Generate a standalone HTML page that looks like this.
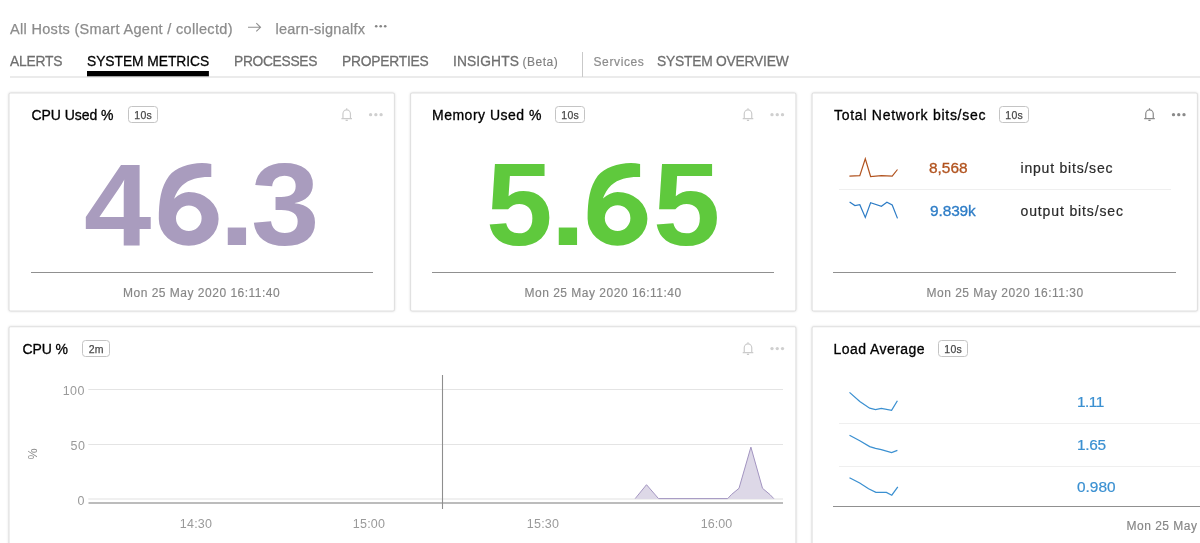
<!DOCTYPE html>
<html>
<head>
<meta charset="utf-8">
<title>learn-signalfx</title>
<style>
*{box-sizing:border-box;margin:0;padding:0}
html,body{width:1200px;height:543px;overflow:hidden;background:#fff}
body{font-family:"Liberation Sans",sans-serif;position:relative;color:#111}
.t{position:absolute;white-space:nowrap;line-height:20px}
.crumb{top:19px;font-size:14.5px;color:#8c8c8c;-webkit-text-stroke:.25px}
.tab{top:51px;-webkit-text-stroke:.3px;font-size:15px;color:#6f6f6f;transform:scaleX(.92);transform-origin:0 0}
.tab.on{color:#000}
.card{position:absolute;background:#fff;border:1px solid #dedede;box-shadow:0 1px 3px rgba(0,0,0,.13)}
.title{font-size:14px;color:#000;-webkit-text-stroke:.3px}
.badge{position:absolute;height:17px;border:1px solid #c4c4c4;border-radius:3.5px;font-size:10.5px;line-height:17px;color:#4a4a4a;text-align:center;background:#fff;letter-spacing:.3px;padding-left:.5px;-webkit-text-stroke:.25px}
.big{position:absolute;text-align:left;font-weight:bold;font-size:117px;line-height:120px;white-space:nowrap;transform-origin:0 0}
.g{position:absolute;top:0;font-weight:bold;font-size:117px;line-height:120px;transform-origin:0 0;white-space:nowrap}
.rule{position:absolute;height:1px;background:#909090}
.ts{font-size:12px;color:#868686;-webkit-text-stroke:.15px}
.val{font-size:14px;transform:scaleX(1.1);transform-origin:0 0;-webkit-text-stroke:.3px}
.lbl{font-size:14px;color:#2b2b2b;-webkit-text-stroke:.2px}
.ax{font-size:12.5px;color:#9a9a9a}
.sep{position:absolute;height:1px;background:#efefef}
svg{position:absolute;left:0;top:0;overflow:visible}
</style>
</head>
<body>
<div id="root" style="position:absolute;left:0;top:0;width:1200px;height:543px;will-change:transform">

<!-- breadcrumb -->
<div id="c1" class="t crumb" style="left:10px;letter-spacing:.32px">All Hosts (Smart Agent / collectd)</div>
<div id="c2" class="t crumb" style="left:275.5px;letter-spacing:.25px">learn-signalfx</div>

<!-- tabs -->
<div id="t1" class="t tab" style="left:10px;letter-spacing:-.2px">ALERTS</div>
<div id="t2" class="t tab on" style="left:86.5px;letter-spacing:-.04px">SYSTEM METRICS</div>
<div id="t3" class="t tab" style="left:233.5px;letter-spacing:-.34px">PROCESSES</div>
<div id="t4" class="t tab" style="left:342px;letter-spacing:-.23px">PROPERTIES</div>
<div id="t5" class="t tab" style="left:453px;letter-spacing:.12px">INSIGHTS</div>
<div id="t5b" class="t tab" style="left:522.5px;top:52px;color:#808080;-webkit-text-stroke:.15px;font-size:12px;letter-spacing:.5px;transform:none">(Beta)</div>
<div id="t6" class="t" style="left:593.5px;top:51.5px;font-size:12px;color:#8c8c8c;letter-spacing:.62px;-webkit-text-stroke:.2px">Services</div>
<div id="t7" class="t tab" style="left:657px;letter-spacing:-.23px">SYSTEM OVERVIEW</div>
<div style="position:absolute;left:10px;top:76px;width:1190px;height:2px;background:#ebebeb"></div>

<div style="position:absolute;left:582px;top:52px;width:1px;height:25px;background:#c9c9c9"></div>

<!-- cards -->
<svg width="1200" height="543" viewBox="0 0 1200 543" style="filter:drop-shadow(0 .5px 1px rgba(0,0,0,.13))">
  <g fill="#fff" stroke="#e0e0e0" stroke-width="1.1">
    <rect x="9" y="93" width="385.4" height="218" rx="1.5"/>
    <rect x="410.6" y="93" width="385.3" height="218" rx="1.5"/>
    <rect x="812.1" y="93" width="385.3" height="218" rx="1.5"/>
    <rect x="9" y="326.8" width="786.9" height="240" rx="1.5"/>
    <rect x="812.1" y="326.8" width="400" height="240" rx="1.5"/>
  </g>
</svg>

<!-- card 1 -->
<div id="h1" class="t title" style="left:31.5px;top:105px;letter-spacing:-.05px">CPU Used %</div>
<div class="badge" style="left:128px;top:106px;width:30px">10s</div>
<div id="b1" style="position:absolute;left:0;top:145px;width:400px;height:120px;color:#a99cbe">
<span class="g" style="left:83.7px;transform:scaleX(1.035)">4</span><span class="g" style="left:219.25px;transform:scaleX(1.106)">.</span><span class="g" style="left:251.45px;transform:scaleX(1.0517)">3</span></div>
<div class="rule" style="left:31px;top:272px;width:342px"></div>
<div id="s1" class="t ts" style="left:123px;top:283px;letter-spacing:.5px">Mon 25 May 2020 16:11:40</div>

<!-- card 2 -->
<div id="h2" class="t title" style="left:432px;top:105px;letter-spacing:.5px">Memory Used %</div>
<div class="badge" style="left:555px;top:106px;width:30px">10s</div>
<div id="b2" style="position:absolute;left:400px;top:145px;width:400px;height:120px;color:#5fc93d">
<span class="g" style="left:86.3px;transform:scaleX(1.024)">5</span><span class="g" style="left:150.35px;transform:scaleX(1.106)">.</span><span class="g" style="left:253.4px;transform:scaleX(1.0345)">5</span></div>
<div class="rule" style="left:432px;top:272px;width:342px"></div>
<div id="s2" class="t ts" style="left:524.5px;top:283px;letter-spacing:.5px">Mon 25 May 2020 16:11:40</div>

<!-- card 3 -->
<div id="h3" class="t title" style="left:834px;top:105px;letter-spacing:.73px">Total Network bits/sec</div>
<div class="badge" style="left:999px;top:106px;width:30px">10s</div>
<div class="sep" style="left:839px;top:189px;width:332px"></div>
<div id="v1" class="t val" style="left:929px;top:158px;color:#b1531f;letter-spacing:0px">8,568</div>
<div id="v2" class="t val" style="left:929.5px;top:200.5px;color:#2d7cc6;letter-spacing:-.08px">9.839k</div>
<div id="l1" class="t lbl" style="left:1020.5px;top:158px;letter-spacing:.79px">input bits/sec</div>
<div id="l2" class="t lbl" style="left:1020.5px;top:200.5px;letter-spacing:.87px">output bits/sec</div>
<div class="rule" style="left:833px;top:272px;width:343px"></div>
<div id="s3" class="t ts" style="left:926.5px;top:283px;letter-spacing:.5px">Mon 25 May 2020 16:11:30</div>

<!-- card 4 -->
<div id="h4" class="t title" style="left:22.5px;top:339px;letter-spacing:-.1px">CPU %</div>
<div class="badge" style="left:82px;top:340px;width:28px">2m</div>
<div id="a100" class="t ax" style="left:55px;top:381px;width:30px;text-align:right;letter-spacing:.5px">100</div>
<div id="a50" class="t ax" style="left:55.6px;top:436px;width:30px;text-align:right;letter-spacing:.6px">50</div>
<div id="a0" class="t ax" style="left:54.5px;top:490.5px;width:30px;text-align:right">0</div>
<div id="apct" class="t ax" style="left:22.7px;top:443.5px;width:20px;text-align:center;transform:rotate(-90deg);color:#8a8a8a;font-size:12.5px">%</div>
<div id="x1" class="t ax" style="letter-spacing:.2px;left:166px;top:514px;width:60px;text-align:center">14:30</div>
<div id="x2" class="t ax" style="letter-spacing:.2px;left:339px;top:514px;width:60px;text-align:center">15:00</div>
<div id="x3" class="t ax" style="letter-spacing:.2px;left:513px;top:514px;width:60px;text-align:center">15:30</div>
<div id="x4" class="t ax" style="left:686.5px;top:514px;width:60px;text-align:center">16:00</div>

<!-- card 5 -->
<div id="h5" class="t title" style="left:833.5px;top:339px;letter-spacing:.45px">Load Average</div>
<div class="badge" style="left:938px;top:340px;width:30px">10s</div>
<div class="sep" style="left:839px;top:423px;width:361px"></div>
<div class="sep" style="left:839px;top:465.5px;width:361px"></div>
<div id="w1" class="t val" style="-webkit-text-stroke:.2px;left:1077px;top:392px;color:#3b90d1;letter-spacing:-.45px">1.11</div>
<div id="w2" class="t val" style="-webkit-text-stroke:.2px;left:1077px;top:434.5px;color:#3b90d1;letter-spacing:-.3px">1.65</div>
<div id="w3" class="t val" style="-webkit-text-stroke:.2px;left:1077px;top:477px;color:#3b90d1;letter-spacing:0px">0.980</div>
<div class="rule" style="left:833px;top:506px;width:367px"></div>
<div id="s5" class="t ts" style="left:1126.5px;top:515.5px;letter-spacing:.5px">Mon 25 May 2020</div>

<!-- vector layer -->
<svg width="1200" height="543" viewBox="0 0 1200 543" fill="none">
  <rect x="87" y="71" width="121.9" height="5.3" fill="#000"/>
  <!-- breadcrumb arrow + dots -->
  <path d="M248 27.3H260.3M256.3 23.2L260.5 27.3L256.3 31.4" stroke="#909090" stroke-width="1.1"/>
  <g fill="#858585"><circle cx="376.2" cy="26.3" r="1.3"/><circle cx="380.7" cy="26.3" r="1.3"/><circle cx="385.2" cy="26.3" r="1.3"/></g>

  <!-- bells & menus -->
  <defs>
    <path id="six" fill-rule="evenodd" d="M53.4 1.2V14.3C44 13.8 32 15.5 24.5 22.5C20.5 26.5 18 31 16.2 35.9C21 31.5 26 29.2 30.8 29.2A29.9 26.9 0 1 1 .9 56.1C.9 38 3 24 11.1 13.1C19 3.5 38 -2 53.4 1.2ZM43.7 55.4a12.8 12.8 0 1 0 -25.6 0a12.8 12.8 0 1 0 25.6 0Z"/>
    <g id="bellp" fill="none" stroke-width="1.2">
      <path d="M0 0V1.6M-3.75 10.3V5.6A3.75 3.9 0 0 1 3.75 5.6V10.3M-5.3 10.35H5.3M-1.1 12.2H1.1"/>
    </g>
    <g id="dots3" stroke="none">
      <circle cx="0" cy="0" r="1.65"/><circle cx="5.25" cy="0" r="1.65"/><circle cx="10.5" cy="0" r="1.65"/>
    </g>
  </defs>
  <use href="#bellp" x="346.7" y="108.2" stroke="#cbcbcb"/>
  <use href="#dots3" x="370.6" y="114.7" fill="#cfcfcf"/>
  <use href="#bellp" x="748" y="108.2" stroke="#cbcbcb"/>
  <use href="#dots3" x="772" y="114.7" fill="#cfcfcf"/>
  <use href="#bellp" x="1149.5" y="108.2" stroke="#8a8a8a"/>
  <use href="#dots3" x="1173.5" y="114.7" fill="#8a8a8a"/>
  <use href="#bellp" x="748" y="342.2" stroke="#cbcbcb"/>
  <use href="#dots3" x="772" y="348.6" fill="#cfcfcf"/>

  <use href="#six" x="157.9" y="162.8" fill="#a99cbe"/>
  <use href="#six" x="586.7" y="162.7" fill="#5fc93d"/>
  <!-- chart grid -->
  <g stroke="#e4e4e4" stroke-width="1">
    <path d="M88.3 389.5H783M88.3 444.5H783"/>
    <path d="M88.3 499H783" stroke="#f0f0f0" stroke-width="2"/>
  </g>
  <rect x="88.5" y="502" width="694.5" height="2" fill="#bcbcbc"/>
  <path d="M442.5 375V509" stroke="#8e8e8e" stroke-width="1.1"/>
  <path d="M635.2 499L646.5 484.7L658.5 499H727.7L731.4 494.6L739 488.3L750.9 447.1L762.5 488.3L770 494.6L773.8 499Z" fill="#ddd8e7"/>
  <path d="M635.2 498.6L646.5 484.7L658.5 498.6H727.7L731.4 494.6L739 488.3L750.9 447.1L762.5 488.3L770 494.6L773.8 498.6" stroke="#a294c0" stroke-width="1" stroke-linejoin="round"/>

  <!-- sparklines card 3 -->
  <path d="M849.4 176.2L859.8 175.7L865.3 158.8L870.6 176.5L881.4 175.7L892.2 176.2L897.5 169.5" stroke="#b1531f" stroke-width="1.2"/>
  <path d="M849.6 201.9L854.9 205.5L859.8 204.7L865.3 217.4L870.6 202.7L881.4 206.3L886.9 202.2L892.2 205L897.5 218.4" stroke="#2d7cc6" stroke-width="1.2"/>

  <!-- sparklines card 5 -->
  <g stroke="#3b90d1" stroke-width="1.25">
  <path d="M849.5 392.4L859.8 401.5L869.7 408.2L875.5 409.5L881.3 408.3L891.6 410.3L897.4 400.7"/>
  <path d="M849.5 435.2L859.8 440.8L869.7 446.6L875.5 448.4L881.3 449.6L891.6 452.7L897.4 450.4"/>
  <path d="M849.5 477.7L859.7 483L868.6 488.7L875.9 492.4H886.4L891.8 495.2L897.8 486.8"/>
  </g>
</svg>

</div>
</body>
</html>
